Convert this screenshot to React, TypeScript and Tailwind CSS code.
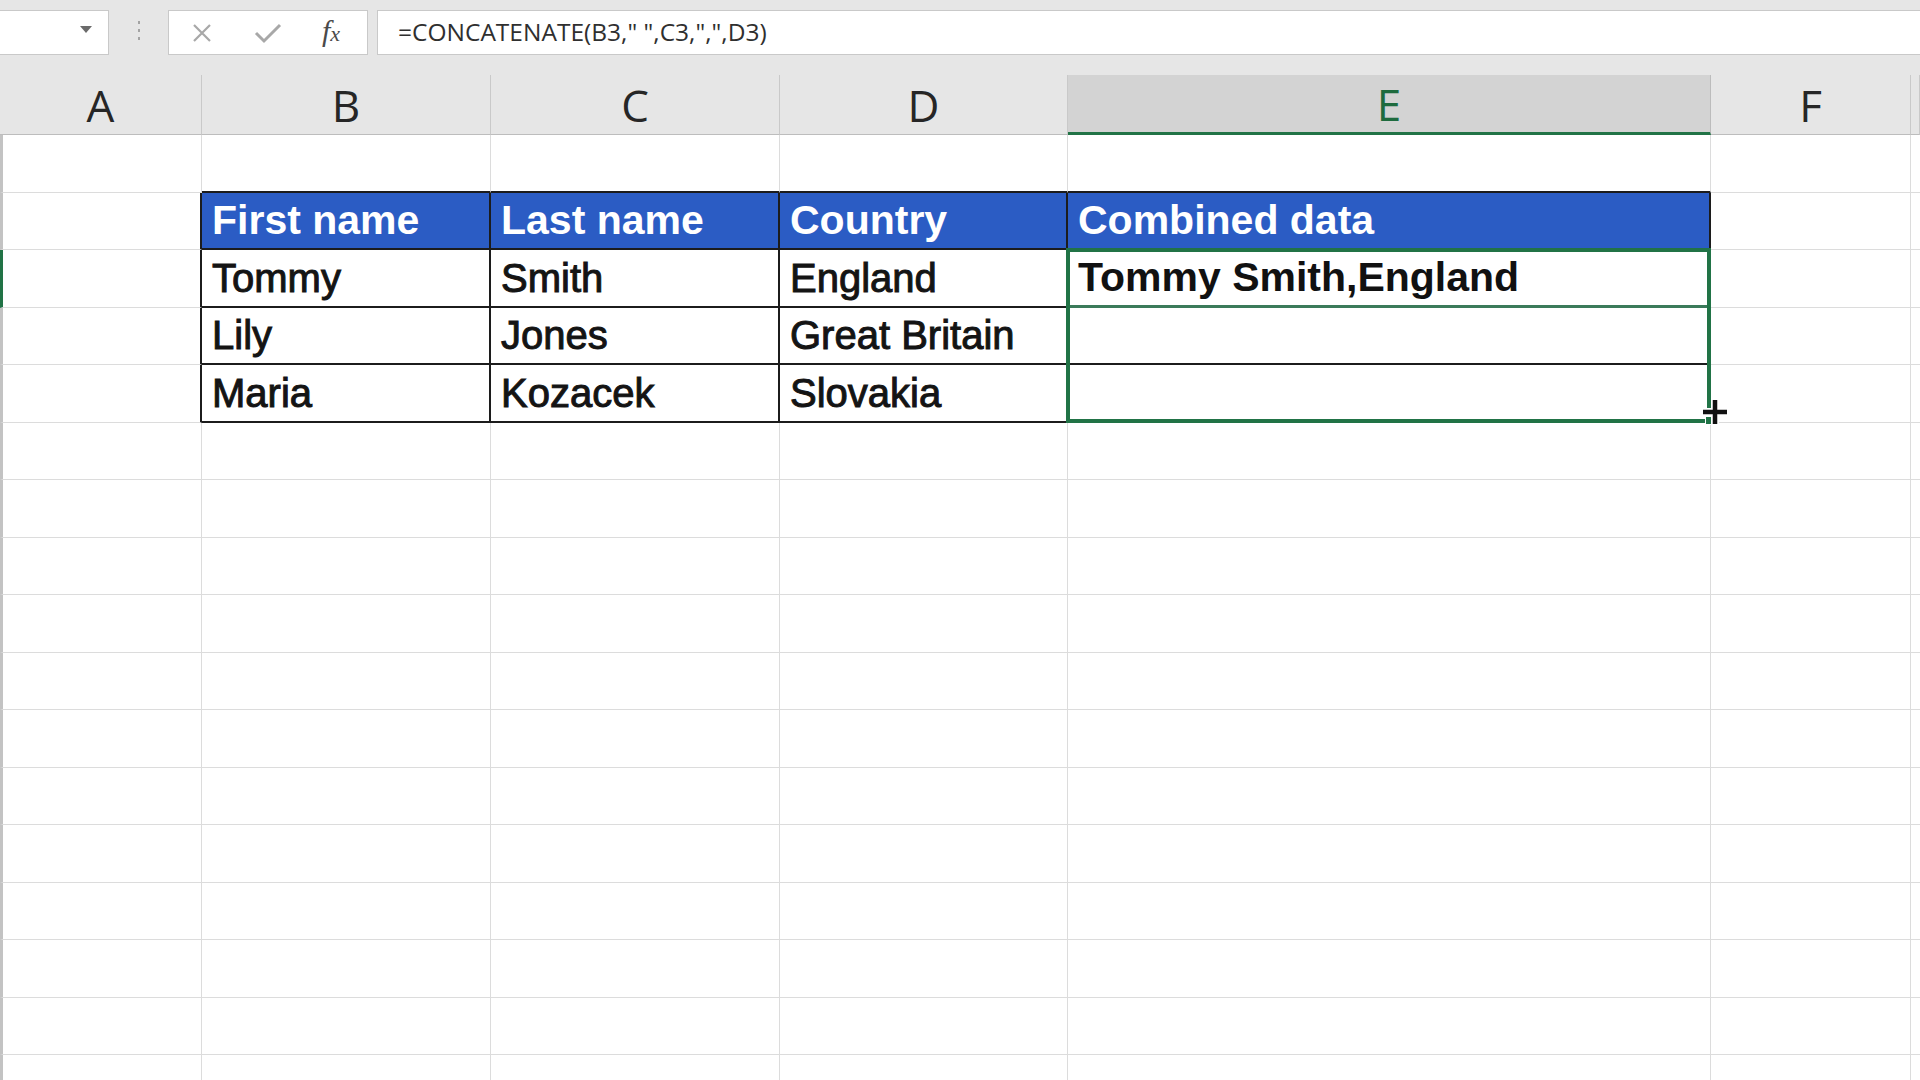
import React from "react"

const COLS = "grid grid-cols-[202px_289px_289px_288px_643px_200px_1fr]"
const LETTERS = ["A", "B", "C", "D", "E", "F", ""]

const TABLE = [
  ["First name", "Last name", "Country", "Combined data"],
  ["Tommy", "Smith", "England", "Tommy Smith,England"],
  ["Lily", "Jones", "Great Britain", ""],
  ["Maria", "Kozacek", "Slovakia", ""],
]

const ROWS = 17

function FormulaBar() {
  return (
    <div className="h-[75px] shrink-0 bg-[#e6e6e6] pt-[10px] flex items-start">
      <div className="w-[109px] h-[45px] bg-white border border-l-0 border-[#c9c9c9] flex items-center justify-end pr-[16px]">
        <svg width="12" height="7" viewBox="0 0 12 7" className="-mt-[6px]">
          <path d="M0 0 L12 0 L6 7 Z" fill="#6b6b6b" />
        </svg>
      </div>
      <div className="w-[59px] h-[45px] flex flex-col items-center justify-center gap-[5px] -mt-[2px]">
        <span className="w-[2px] h-[3px] bg-[#a3a3a3]" />
        <span className="w-[2px] h-[3px] bg-[#a3a3a3]" />
        <span className="w-[2px] h-[3px] bg-[#a3a3a3]" />
      </div>
      <div className="w-[200px] h-[45px] bg-white border border-[#c9c9c9] flex items-center pl-[23px]">
        <svg width="20" height="20" viewBox="0 0 20 20">
          <path d="M2 2 L18 18 M18 2 L2 18" stroke="#a8a8a8" strokeWidth="2.2" />
        </svg>
        <svg width="28" height="22" viewBox="0 0 28 22" className="ml-[42px]">
          <path d="M2 11 L10 19 L26 3" stroke="#a8a8a8" strokeWidth="3" fill="none" />
        </svg>
        <span className="ml-[40px] font-['Liberation_Serif',serif] italic text-[#4a4a4a] text-[30px] leading-none -mt-[4px]">
          f<span className="text-[22px]">x</span>
        </span>
      </div>
      <div className="flex-1 ml-[9px] h-[45px] bg-white border border-r-0 border-[#c9c9c9] flex items-center pl-[20px]">
        <span className="font-['Open_Sans',sans-serif] text-[24.5px] text-[#2f2f2f] whitespace-pre">
          =CONCATENATE(B3," ",C3,",",D3)
        </span>
      </div>
    </div>
  )
}

function ColumnHeaders() {
  return (
    <div className={COLS + " h-[60px] shrink-0 bg-[#e6e6e6]"}>
      {LETTERS.map((l, i) => (
        <div
          key={i}
          className={
            i === 4
              ? "bg-[#d3d3d3] border-r border-r-[#bcbcbc] border-b-[3px] border-b-[#217346] flex items-center justify-center text-[#1e6b3e]"
              : "border-r border-r-[#c9c9c9] border-b border-b-[#bdbdbd] flex items-center justify-center text-[#262626]"
          }
        >
          <span className="font-['Open_Sans',sans-serif] text-[44px] leading-none">{l}</span>
        </div>
      ))}
    </div>
  )
}

function Selection() {
  return (
    <>
      <div className="absolute -left-[2px] -top-[2px] w-[645px] h-[175px] border-[4px] border-[#217346] pointer-events-none z-10" />
      <div className="absolute left-[637px] top-[166px] w-[9px] h-[9px] bg-[#217346] border border-white z-10" />
      <svg width="28" height="28" viewBox="0 0 28 28" className="absolute left-[633px] top-[148px] z-20">
        <path d="M14 1 V27 M1 14 H27" stroke="#fff" strokeWidth="8" />
        <path d="M14 2 V26 M2 14 H26" stroke="#111" strokeWidth="4.5" />
      </svg>
    </>
  )
}

function Cell({ r, c }: { r: number; c: number }) {
  const inTable = r >= 1 && r <= 4
  const tCol = c >= 1 && c <= 4
  const right =
    inTable && c <= 4 ? "border-r-2 border-r-[#1c1c1c]" : "border-r border-r-[#dcdcdc]"
  let bottom = "border-b border-b-[#dcdcdc]"
  if (tCol && (r === 0 || inTable)) bottom = "border-b-2 border-b-[#1c1c1c]"
  if (r === 2 && c === 4) bottom = "border-b-[3px] border-b-[#3b7a5a]"
  let left = ""
  if (c === 0) left = r === 2 ? "border-l-[3px] border-l-[#217346]" : "border-l-[3px] border-l-[#c3c3c3]"

  const isHead = r === 1 && tCol
  const text = inTable && tCol ? TABLE[r - 1][c - 1] : ""
  let textCls = ""
  if (isHead) textCls = "text-[41px] font-bold text-white"
  else if (r === 2 && c === 4) textCls = "text-[41px] font-bold text-[#111]"
  else textCls = "text-[40px] text-[#141414] [-webkit-text-stroke:1px_#141414]"

  return (
    <div
      className={[
        "relative h-[57.5px] flex items-center pl-[10px] whitespace-nowrap",
        right,
        bottom,
        left,
        isHead ? "bg-[#2b5cc4]" : "bg-white",
      ].join(" ")}
    >
      {text && (
        <span className={"font-['Liberation_Sans',Arial,sans-serif] leading-none " + textCls}>
          {text}
        </span>
      )}
      {r === 2 && c === 4 && <Selection />}
    </div>
  )
}

export default function App() {
  return (
    <div className="w-[1920px] h-[1080px] overflow-hidden bg-white flex flex-col">
      <FormulaBar />
      <ColumnHeaders />
      <div className="flex flex-col shrink-0">
        {Array.from({ length: ROWS }).map((_, r) => (
          <div key={r} className={COLS + " shrink-0"}>
            {LETTERS.map((_, c) => (
              <Cell key={c} r={r} c={c} />
            ))}
          </div>
        ))}
      </div>
    </div>
  )
}
